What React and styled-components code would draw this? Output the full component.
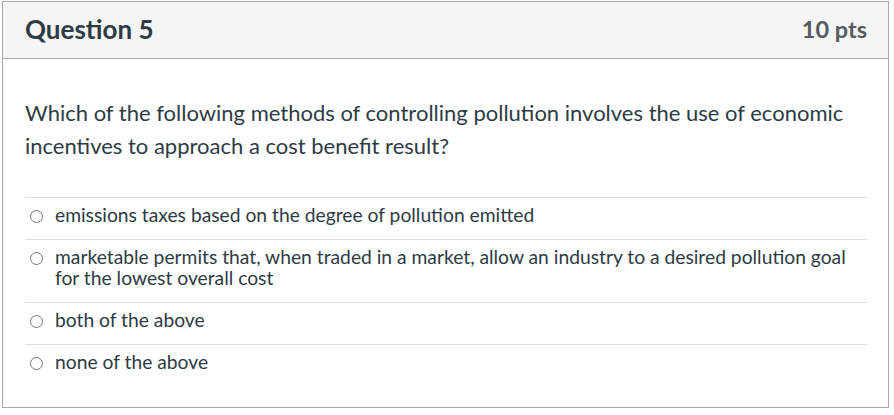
import React from "react";
import styled, { createGlobalStyle } from "styled-components";

const Global = createGlobalStyle`
  html, body { margin: 0; padding: 0; background: #fff; }
  body { font-family: Lato, "Open Sans", sans-serif; color: #2d3b45; }
`;

const Frame = styled.div`
  margin: 1px 0 0 2px;
  width: 887px;
  height: 407px;
  box-sizing: border-box;
  border: 1px solid #a8a8a8;
  display: flex;
  flex-direction: column;
`;

const Header = styled.div`
  height: 57px;
  box-sizing: border-box;
  background: #f5f5f5;
  border-bottom: 1px solid #a8a8a8;
  display: flex;
  align-items: center;
  justify-content: space-between;
  padding: 0 21px 2px 22px;
`;

const Title = styled.h2`
  margin: 0;
  font-size: 26px;
  font-weight: 700;
  color: #2d3b45;
`;

const Points = styled.span`
  font-size: 23.5px;
  font-weight: 700;
  color: #555b60;
`;

const Body = styled.div`
  padding: 37px 21px 0 22px;
`;

const Prompt = styled.p`
  margin: 0 0 35px 0;
  font-size: 22px;
  line-height: 33px;
  color: #2d3b45;
`;

const Answers = styled.div`
  display: flex;
  flex-direction: column;
`;

const Answer = styled.label`
  display: flex;
  align-items: flex-start;
  border-top: 1px solid #dddddd;
  padding: 6px 0 14px 0;
  font-size: 19.25px;
  line-height: 21px;
  color: #2d3b45;
`;

const Radio = styled.span`
  flex: none;
  width: 11px;
  height: 11px;
  border: 1px solid #777;
  border-radius: 50%;
  margin: 6px 12px 0 5px;
`;

const answers = [
  "emissions taxes based on the degree of pollution emitted",
  "marketable permits that, when traded in a market, allow an industry to a desired pollution goal for the lowest overall cost",
  "both of the above",
  "none of the above",
];

export default function App() {
  return (
    <>
      <Global />
      <Frame>
        <Header>
          <Title>Question 5</Title>
          <Points>10 pts</Points>
        </Header>
        <Body>
          <Prompt>
            Which of the following methods of controlling pollution involves the use of economic incentives to approach a cost benefit result?
          </Prompt>
          <Answers>
            {answers.map((a) => (
              <Answer key={a}>
                <Radio />
                <span>{a}</span>
              </Answer>
            ))}
          </Answers>
        </Body>
      </Frame>
    </>
  );
}
